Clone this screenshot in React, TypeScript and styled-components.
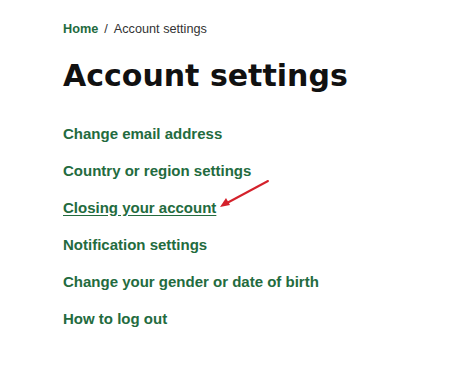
import React from "react";
import styled, { createGlobalStyle } from "styled-components";

const Global = createGlobalStyle`
  html, body { margin: 0; padding: 0; background: #fff; }
  body { font-family: "Liberation Sans", Arial, sans-serif; }
`;

const Page = styled.div`
  width: 474px;
  height: 382px;
  box-sizing: border-box;
  padding: 21px 0 0 63px;
  position: relative;
  overflow: hidden;
`;

const Crumbs = styled.nav`
  display: flex;
  align-items: center;
  gap: 6px;
  font-size: 12.7px;
  line-height: 16px;
  color: #333;
`;

const CrumbLink = styled.a`
  color: #236b3e;
  font-weight: 700;
  text-decoration: none;
`;

const Title = styled.h1`
  margin: 19px 0 0 0;
  font-family: "DejaVu Sans", "Liberation Sans", sans-serif;
  font-size: 30px;
  line-height: 40px;
  font-weight: 700;
  color: #111;
`;

const LinkList = styled.ul`
  list-style: none;
  margin: 27px 0 0 0;
  padding: 0;
  display: flex;
  flex-direction: column;
  gap: 17px;
`;

const Item = styled.li`
  position: relative;
  height: 20px;
  display: flex;
  align-items: center;
`;

const SettingLink = styled.a<{ $active?: boolean }>`
  color: #236b3e;
  font-size: 15px;
  font-weight: 700;
  text-decoration: ${(p) => (p.$active ? "underline" : "none")};
  text-underline-offset: 2px;
`;

const Arrow = styled.svg`
  position: absolute;
  left: 152px;
  top: -18px;
`;

const links = [
  "Change email address",
  "Country or region settings",
  "Closing your account",
  "Notification settings",
  "Change your gender or date of birth",
  "How to log out",
];

export default function App() {
  return (
    <Page>
      <Global />
      <Crumbs>
        <CrumbLink href="#">Home</CrumbLink>
        <span>/</span>
        <span>Account settings</span>
      </Crumbs>
      <Title>Account settings</Title>
      <LinkList>
        {links.map((l) => (
          <Item key={l}>
            <SettingLink href="#" $active={l === "Closing your account"}>
              {l}
            </SettingLink>
            {l === "Closing your account" && (
              <Arrow width="60" height="34" viewBox="0 0 60 34">
                <line x1="53" y1="2" x2="12" y2="24" stroke="#d4212b" strokeWidth="2" strokeLinecap="round" />
                <polygon points="5,28 11,19 15,26" fill="#d4212b" />
              </Arrow>
            )}
          </Item>
        ))}
      </LinkList>
    </Page>
  );
}
